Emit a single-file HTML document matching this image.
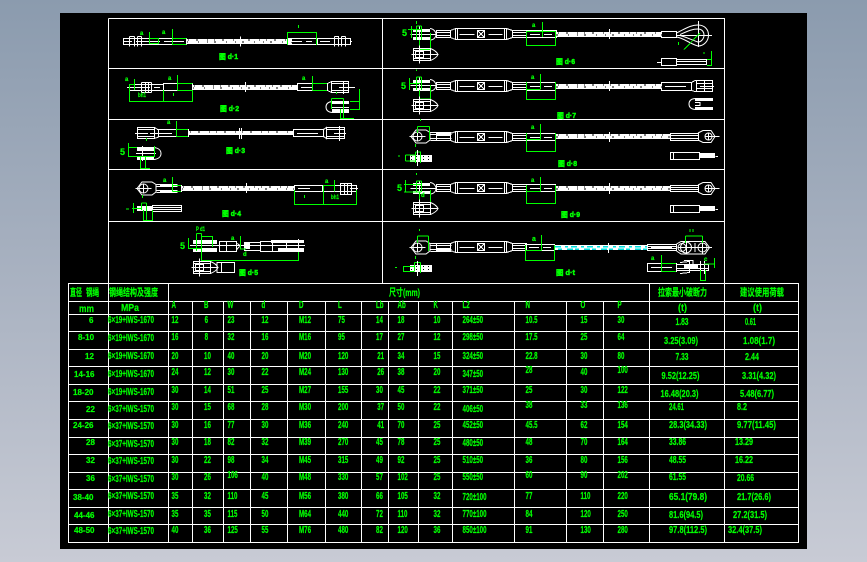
<!DOCTYPE html>
<html><head><meta charset="utf-8">
<style>
html,body{margin:0;padding:0;width:867px;height:562px;overflow:hidden;background:linear-gradient(#8b9bae,#a9b2c1 50%,#c8cbd5)}
svg{position:absolute;left:0;top:0;display:block}
text{font-family:"Liberation Sans","WenQuanYi Zen Hei","Noto Sans CJK SC",sans-serif;fill:#0f0;stroke:#0f0;stroke-width:.2;font-size:10px;font-weight:bold}
.w{fill:none;stroke:#fff;stroke-width:1;shape-rendering:crispEdges}
.wc{fill:none;stroke:#fff;stroke-width:1}
.g{fill:none;stroke:#0f0;stroke-width:1;shape-rendering:crispEdges}
.f{fill:#fff;stroke:none;shape-rendering:crispEdges}
.s{font-size:6px}
.cap{font-size:7px;stroke-width:.5}
</style></head><body>
<svg width="867" height="562" viewBox="0 0 867 562" xmlns="http://www.w3.org/2000/svg">
<defs>
<g id="tb">
<path class="w" d="M0.5 -3.5H14.5V3.5H0.5ZM0.5 -1.5H14.5M0.5 1.5H14.5M14.5 -3.5L19.5 -5.5V5.5L14.5 3.5M19.5 -5.5H70.5V5.5H19.5ZM21.5 -5.5V5.5M68.5 -5.5V5.5M41.5 -3.5H48.5V3.5H41.5ZM41.5 -3.5L48.5 3.5M48.5 -3.5L41.5 3.5M70.5 -5.5L76.5 -3.5V3.5L70.5 5.5M76.5 -3.5H90.5V3.5H76.5ZM76.5 -1.5H90.5M76.5 1.5H90.5"/>
<path class="w" d="M23.5 0.5H38.5M52.5 0.5H66.5"/>
</g>
<g id="fork">
<rect class="f" x="0" y="-5" width="17" height="3"/><rect class="f" x="0" y="3" width="17" height="3"/>
<path class="wc" d="M17 -5.5C21 -5 23 -2 23 0.5C23 3 21 6 17 6"/>
<path class="w" d="M-2.5 0.5H22.5M6.5 -7.5V8.5"/>
</g>
<g id="clev">
<path class="w" d="M0.5 -5.5H17.5V6.5H0.5ZM0.5 -3.5H17.5M0.5 4.5H17.5M-1.5 0.5H25.5M6.5 -8.5V9.5M2.5 -2.5H10.5V3.5H2.5Z"/>
<path class="wc" d="M17.5 -5.5C21 -4 24 -2 25 0.5C24 3 21 5 17.5 6.5"/>
</g>
<g id="eyeL">
<circle class="wc" cx="6.5" cy="0.5" r="4.5"/>
<path class="wc" d="M0 0.5L5 -6H15L19 -3.5V4L15 7H5Z"/>
<path class="w" d="M-1.5 0.5H14.5M6.5 -4.5V5.5"/>
<path class="w" d="M19.5 -3.5H40.5M19.5 -1.5H40.5M19.5 2.5H40.5M19.5 4.5H40.5"/>
</g>
<g id="eyeR">
<circle class="wc" cx="10.5" cy="0.5" r="3.5"/>
<path class="wc" d="M0 -3L5 -5.5H13L17 0.5L13 6.5H5L0 4"/>
<path class="w" d="M7.5 0.5H21.5M10.5 -3.5V4.5"/>
</g>
<g id="pin">
<rect class="f" x="0" y="-3" width="22" height="7"/>
<path d="M1 -1.5H22M1 1.5H22" stroke="#000" stroke-width="1" stroke-dasharray="1 4 1 6" shape-rendering="crispEdges"/>
</g>
<g id="sleeve">
<path class="w" d="M0.5 -3.5H29.5V3.5H0.5ZM29.5 -2.5L45 -2.5"/>
<rect class="f" x="29" y="-2" width="16" height="4"/>
<path class="w" d="M3.5 -3.5V3.5M45.5 0.5H48"/>
</g>
<g id="ropeL">
<rect class="f" x="0" y="-2" width="106" height="5"/>
<path d="M2 -1H106" stroke="#000" stroke-width="1" stroke-dasharray="1 7 2 9 1 6" shape-rendering="crispEdges"/>
<path d="M0 1H106" stroke="#000" stroke-width="1" stroke-dasharray="2 10 1 8 1 6" shape-rendering="crispEdges"/>
</g>
<g id="ropeX">
<rect class="f" x="0" y="-2" width="114" height="5"/>
<path d="M2 -1H114" stroke="#000" stroke-width="1" stroke-dasharray="1 7 2 9 1 6" shape-rendering="crispEdges"/>
<path d="M0 1H114" stroke="#000" stroke-width="1" stroke-dasharray="2 10 1 8 1 6" shape-rendering="crispEdges"/>
</g>
</defs>

<rect x="60" y="13" width="747" height="536" fill="#000"/>

<!-- upper frame -->
<path class="w" d="M108.5 18.5H724.5V283.5M108.5 18.5V283.5M382.5 18.5V283.5M108.5 68.5H724.5M108.5 119.5H724.5M108.5 169.5H724.5M108.5 221.5H724.5"/>

<!-- table grid -->
<path class="w" d="M68.5 283.5H798.5V542.5H68.5ZM68.5 301.5H798.5M68.5 314.5H798.5M68.5 331.5H798.5M68.5 349.5H798.5M68.5 366.5H798.5M68.5 384.5H798.5M68.5 401.5H798.5M68.5 419.5H798.5M68.5 437.5H798.5M68.5 454.5H798.5M68.5 472.5H798.5M68.5 489.5H798.5M68.5 507.5H798.5M68.5 524.5H798.5M108.5 283.5V542.5M168.5 283.5V542.5M649.5 283.5V542.5M724.5 283.5V542.5M192.5 301.5V542.5M223.5 301.5V542.5M250.5 301.5V542.5M287.5 301.5V542.5M325.5 301.5V542.5M361.5 301.5V542.5M388.5 301.5V542.5M418.5 301.5V542.5M452.5 301.5V542.5M514.5 301.5V542.5M566.5 301.5V542.5M603.5 301.5V542.5"/>

<!-- L1 -->
<use href="#ropeL" x="186" y="41"/>
<path class="w" d="M123.5 41.5H132M136 41.5H160M164 41.5H184M123.5 38.5H186.5V44.5H123.5ZM129.5 36.5V46.5M134.5 36.5V46.5M137.5 36.5V46.5M141.5 36.5V46.5M129.5 36.5H134.5M137.5 36.5H141.5M158.5 38.5V44.5M240.5 36.5V46.5M287.5 38.5H350.5V44.5H287.5ZM317.5 38.5V44.5M291 41.5H302M306 41.5H312M320 41.5H330M334.5 36.5V46.5M338.5 36.5V46.5M341.5 36.5V46.5M345.5 36.5V46.5M334.5 36.5H339M341.5 36.5H345.5M350.5 41.5H352"/>
<path class="g" d="M149.5 32V43.5H158.5V38.5H149.5M172.5 29V44.5H186.5M172.5 38.5H186.5M287.5 45V32.5H316.5V45M298.5 25V28"/>
<text class="s" x="140" y="35">a</text><text class="s" x="162" y="34">a</text>
<text class="cap" x="219" y="59" textLength="19" lengthAdjust="spacingAndGlyphs">图 d·1</text>

<!-- L2 -->
<use href="#ropeL" x="192" y="87"/>
<path class="w" d="M127 87.5H150M154 87.5H160M163.5 83.5H192.5V90.5H163.5ZM129.5 84.5H163.5M129.5 90.5H163.5M141.5 82.5V92.5M145.5 82.5V92.5M148.5 82.5V92.5M151.5 82.5V92.5M141.5 82.5H151.5M141.5 92.5H151.5M245.5 82V92M297.5 83.5H327.5V90.5H297.5ZM327.5 83.5L331.5 81.5V92.5L327.5 90.5M331.5 81.5H348.5V92.5H331.5ZM331.5 83.5H348.5M331.5 90.5H348.5M343.5 81V94M339 87.5H355M301 87.5H312"/>
<path class="g" d="M129.5 84V101.5H192.5V90M163.5 90V101.5M129.5 84.5H134.5M134.5 79V90M177.5 75V90.5M177.5 83.5H192.5M177.5 90.5H192.5M312.5 76V90.5M312.5 83.5H327M312.5 90.5H327M173.5 93V96M336.5 92V94"/>
<text class="s" x="125" y="81">a</text><text class="s" x="168" y="80">a</text><text class="s" x="302" y="80">a</text>
<text class="s" x="138" y="97" textLength="8" lengthAdjust="spacingAndGlyphs">bh1</text>
<text class="cap" x="220" y="111" textLength="19" lengthAdjust="spacingAndGlyphs">图 d·2</text>
<rect class="f" x="332" y="101" width="17" height="3"/><rect class="f" x="332" y="109" width="17" height="4"/>
<path class="wc" d="M332 101.5C328 102 326 104 326 107C326 110 328 112 332 112.5"/>
<path class="w" d="M332 107.5H349M343.5 100V114"/>
<path class="g" d="M331.5 98.5H343.5M331.5 98.5V109M343.5 98.5V118M340.5 109V118.5H354M350 101.5H359.5V98M359.5 89V110M350 109.5H359.5"/>

<!-- L3 -->
<rect class="f" x="188" y="131" width="105" height="4"/>
<path d="M190 132H293" stroke="#000" stroke-dasharray="1 7 2 9 1 6" shape-rendering="crispEdges"/>
<path class="w" d="M137.5 127.5H154.5V138.5H137.5ZM137.5 129.5H154.5M137.5 136.5H154.5M154.5 127.5L158.5 130V137L154.5 138.5M158.5 129.5H188.5V136.5H158.5ZM135 133.5H148M150 133.5H172M241.5 128V139M239.5 128V139M293.5 129.5H323.5V136.5H293.5ZM323.5 129.5L326.5 127.5V138.5L323.5 136.5M326.5 127.5H344.5V138.5H326.5ZM326.5 129.5H344.5M326.5 136.5H344.5M339.5 126V141M334 133.5H346M297 133.5H318"/>
<path class="g" d="M176.5 121V136.5M176.5 129.5H188M176.5 136.5H188M146.5 138V141"/>
<text class="s" x="167" y="124">a</text>
<rect class="f" x="137" y="147" width="17" height="4"/><rect class="f" x="137" y="156" width="17" height="4"/>
<path class="wc" d="M154 147.5C158 148 161 150 161 153.5C161 157 158 159 154 159.5"/>
<path class="w" d="M136 153.5H156M142.5 146V161"/>
<path class="g" d="M128.5 143V156.5H154.5V146M128.5 147.5H137M140.5 157V168.5H150M145.5 157V168.5"/>
<text x="120" y="155" style="font-size:9px">5</text>
<text class="cap" x="226" y="153" textLength="19" lengthAdjust="spacingAndGlyphs">图 d·3</text>

<!-- L4 -->
<rect class="f" x="181" y="186" width="113" height="5"/>
<path d="M183 187H294" stroke="#000" stroke-dasharray="1 7 2 9 1 6" shape-rendering="crispEdges"/>
<path d="M181 189H294" stroke="#000" stroke-dasharray="2 10 1 8 1 6" shape-rendering="crispEdges"/>
<use href="#eyeL" x="137" y="188"/>
<path class="w" d="M160 185.5H181.5V191.5H160M246.5 183V193M294.5 185.5H356.5V191.5H294.5ZM322.5 185.5V191.5M298 188.5H310M340.5 183.5H351.5V194.5H340.5ZM344.5 183.5V194.5M347.5 183.5V194.5M358 188.5H350"/>
<path class="g" d="M172.5 177V191.5M172.5 185.5H181M172.5 191.5H181M294.5 190V204.5H356.5V190M323.5 185V204.5M334.5 180V191.5M323.5 185.5H334.5M304.5 195V198M142.5 195V198"/>
<text class="s" x="163" y="182">a</text><text class="s" x="325" y="183">a</text>
<text class="s" x="331" y="199" textLength="8" lengthAdjust="spacingAndGlyphs">bh1</text>
<path class="w" d="M152.5 205.5H181.5V211.5H152.5ZM152.5 207.5H181.5M152.5 209.5H181.5"/>
<rect class="f" x="137" y="206" width="16" height="5"/>
<path class="g" d="M133.5 203V213M132 208.5H141.5M141.5 203H146.5M141.5 203V210M146.5 203V220.5M143.5 210V220.5H152.5V210M126 209H129"/>
<text class="cap" x="222" y="216" textLength="19" lengthAdjust="spacingAndGlyphs">图 d·4</text>

<!-- L5 -->
<rect class="f" x="193" y="240" width="24" height="4"/><rect class="f" x="193" y="248" width="24" height="4"/>
<rect class="f" x="271" y="240" width="33" height="3"/><rect class="f" x="278" y="248" width="26" height="4"/>
<rect class="f" x="244" y="243" width="6" height="6"/>
<path class="w" d="M190 245.5H305M219.5 241.5H236.5V251.5H219.5ZM260.5 241.5H286.5V251.5H260.5ZM236.5 243L240 245.5L236.5 250M244.5 242.5H260.5V250.5H244.5ZM298.5 239V255M226.5 241.5V251.5M272.5 241.5V251.5"/>
<path class="g" d="M196.5 233.5H201.5M196.5 233.5V251M201.5 233.5V260.5H298.5V252M201.5 236.5H212.5V247M188.5 238V248.5H201M240.5 236V249H246"/>
<text x="180" y="249" style="font-size:9px">5</text>
<text class="s" x="196" y="231" textLength="9" lengthAdjust="spacingAndGlyphs">P d1</text>
<text class="s" x="231" y="240">a</text><text class="s" x="243" y="256">d</text>
<use href="#clev" x="193" y="267"/>
<path class="w" d="M217 262.5H234.5V272.5H217ZM221.5 262.5V272.5M234.5 263V272"/>
<text class="cap" x="239" y="275" textLength="19" lengthAdjust="spacingAndGlyphs">图 d·5</text>

<!-- R1 -->
<use href="#fork" x="413" y="34"/><use href="#tb" x="436" y="34"/>
<path class="w" d="M526.5 30.5H556.5V37.5H526.5ZM530 34.5H540M544 34.5H552M661.5 31.5H676.5V37.5H661.5ZM609.5 29V39"/>
<use href="#ropeL" x="556" y="34"/>
<path class="wc" d="M676.5 33C685 29 690 25 698 25C705 25 708.5 30 708.5 35C708.5 41 704 46 698 46C690 44 684 38 676.5 37"/>
<path class="wc" d="M680 34.5C688 31 692 29 698 29C702 29 704 32 704 35C704 39 701 42 698 42C692 40 686 37 680 35.5"/>
<path class="w" d="M698.5 21V47M676 35.5H712"/>
<path class="g" d="M411.5 26V38M408 29.5H421M416.5 26H421.5M416.5 26V40M421.5 26V40M419.5 40V49.5H430.5V33M416.5 21V24M526.5 31.5H555.5M526.5 31.5V45.5H555.5V31.5M542.5 22V37M678.5 42V45M684 49.5L700 33"/>
<text x="402" y="36" style="font-size:9px">5</text><text class="s" x="532" y="27">a</text>
<text class="cap" x="556" y="64" textLength="19" lengthAdjust="spacingAndGlyphs">图 d·6</text>
<use href="#clev" x="413" y="54"/>
<path class="w" d="M657 62.5H661.5M661.5 58.5H676.5V65.5H661.5ZM676.5 59.5H706.5V64.5H676.5ZM676.5 61.5H706.5"/>
<path class="g" d="M711.5 51V65.5H707M707 59.5H712M703 53H705"/>

<!-- R2 -->
<use href="#fork" x="413" y="85"/><use href="#tb" x="436" y="86"/>
<path class="w" d="M526.5 82.5H555.5V90.5H526.5ZM530 86.5H540M544 86.5H552M661.5 82.5H691.5V90.5H661.5ZM665 86.5H686M609.5 81V91M691.5 82.5L695 80.5H712.5V91.5H695L691.5 90.5M696.5 80.5V91.5M704.5 80V92M700 86.5H714M696 83.5H712M696 88.5H712"/>
<use href="#ropeL" x="556" y="86"/>
<path class="g" d="M409.5 78V90M409 83.5H420M416.5 77H421.5M416.5 77V90M421.5 77V90M419.5 90V99H430.5V85M416.5 69.5V71M526.5 82V99.5H555.5V82M540.5 74V89M526.5 89.5H540.5"/>
<text x="401" y="89" style="font-size:9px">5</text><text class="s" x="531" y="79">a</text>
<text class="cap" x="557" y="118" textLength="19" lengthAdjust="spacingAndGlyphs">图 d·7</text>
<use href="#clev" x="413" y="105"/>
<rect class="f" x="695" y="98" width="18" height="3"/><rect class="f" x="695" y="107" width="18" height="3"/>
<path class="wc" d="M695 98.5C690 99 689 102 689 104C689 107 691 109 695 109.5"/>
<path class="w" d="M695 102.5H700V105.5H695"/>

<!-- R3 -->
<use href="#eyeL" x="411" y="136"/><use href="#tb" x="436" y="137"/>
<path class="w" d="M526.5 133.5H555.5V140.5H526.5ZM530 137.5H540M544 137.5H552M670.5 133.5H698.5V140.5H670.5ZM609.5 132V142M670.5 135.5H698.5M670.5 138.5H698.5"/>
<use href="#ropeX" x="556" y="136"/>
<use href="#eyeR" x="698" y="136"/>
<path class="g" d="M417.5 126.5H429.5M417.5 126.5V133M429.5 126.5V140M420.5 119V121M415.5 144V147M526.5 133V151.5H555.5V133M540.5 124V139.5M526.5 139.5H540.5"/>
<text class="s" x="531" y="129">a</text>
<text class="cap" x="558" y="166" textLength="19" lengthAdjust="spacingAndGlyphs">图 d·8</text>
<use href="#pin" x="410" y="158"/><path class="g" d="M405.5 155V161M405.5 155H415M405.5 161H415M415.5 152V163M415.5 152H420.5V163M398 156H400"/>
<path class="w" d="M417.5 150V166"/>
<use href="#sleeve" x="670" y="156"/>

<!-- R4 -->
<use href="#fork" x="413" y="188"/><use href="#tb" x="436" y="188"/>
<path class="w" d="M526.5 184.5H555.5V191.5H526.5ZM530 188.5H540M544 188.5H552M670.5 185.5H698.5V191.5H670.5ZM609.5 183V194M670.5 187.5H698.5M670.5 189.5H698.5"/>
<use href="#ropeX" x="556" y="188"/>
<use href="#eyeR" x="698" y="188"/>
<path class="g" d="M405.5 180V192M404 192H421M404 184.5H421M416.5 181H421.5M416.5 181V192M421.5 181V192M419.5 192V202.5H430.5V190M416.5 173V175M526.5 185V203.5H555.5V185M540.5 177V191.5M526.5 191.5H540.5"/>
<text x="397" y="191" style="font-size:9px">5</text><text class="s" x="531" y="182">a</text><text class="s" x="421" y="197">d</text>
<text class="cap" x="561" y="217" textLength="19" lengthAdjust="spacingAndGlyphs">图 d·9</text>
<use href="#clev" x="413" y="208"/>
<use href="#sleeve" x="670" y="209"/>

<!-- R5 -->
<use href="#eyeL" x="411" y="247"/><use href="#tb" x="436" y="247"/>
<path class="w" d="M525.5 244.5H554.5V250.5H525.5ZM529 247.5H539M543 247.5H551"/>
<rect x="555" y="245" width="93" height="5" fill="#fff" shape-rendering="crispEdges"/>
<path d="M555 246.5H648" stroke="#0dd" stroke-width="1.5" stroke-dasharray="6 4 3 3" shape-rendering="crispEdges"/>
<path d="M558 249H648" stroke="#0dd" stroke-width="1.5" stroke-dasharray="4 5 6 2" shape-rendering="crispEdges"/>
<path class="w" d="M608.5 243V253M647.5 244.5H676.5V250.5H647.5ZM647.5 246.5H676.5M647.5 248.5H676.5M651 247.5H672"/>
<circle class="wc" cx="686" cy="247.5" r="5.5"/><circle class="wc" cx="702.5" cy="247.5" r="4.5"/><circle class="wc" cx="682" cy="247.5" r="4"/>
<path class="wc" d="M676.5 244L681 241.5H695L705 241.5L709.5 247.5L705 254H681L676.5 251"/>
<path class="w" d="M678 247.5H712M686.5 241V254M702.5 241V254M695 243V252"/>
<path class="g" d="M417.5 236H428.5M417.5 236V243M428.5 236V251M419.5 229V231M415.5 256V259M525.5 245V260.5H554.5V245M541.5 235V250.5M525.5 250.5H541.5M685.5 236H702.5M685.5 236V243M702.5 236V243M690 229V232M693 229V232"/>
<text x="532" y="241" style="font-size:7px">a</text>
<text class="cap" x="556" y="275" textLength="19" lengthAdjust="spacingAndGlyphs">图 d·t</text>
<use href="#pin" x="410" y="268"/>
<path class="g" d="M403 266.5H414.5M403 271.5H414.5M403.5 266V272M414.5 262.5H420.5M414.5 262.5V271M420.5 262.5V273M395 267.5H397"/>
<path class="w" d="M417.5 261V276"/>
<path class="w" d="M647.5 263.5H676.5V271.5H647.5ZM651 267.5H672M676.5 264.5H708.5V270.5H676.5ZM676.5 268.5H708.5M680 262.5L689.5 261.5V272.5L680 273.5M684 260.5H693V264M700.5 261V274M704.5 261V274"/>
<rect class="f" x="684" y="265" width="14" height="3"/>
<path class="g" d="M661.5 255V271.5M661.5 263.5H676M661.5 271.5H676M714.5 258V268M704 264H715M700.5 270V280.5H705.5V270"/>
<text class="s" x="651" y="260">a</text><text class="s" x="704" y="261">c</text>

<!-- table header -->
<text x="70" y="296" textLength="12" lengthAdjust="spacingAndGlyphs">直径</text>
<text x="86" y="296" textLength="13" lengthAdjust="spacingAndGlyphs">钢绳</text>
<text x="109" y="296" textLength="49" lengthAdjust="spacingAndGlyphs">钢绳结构及强度</text>
<text x="389" y="296" textLength="31" lengthAdjust="spacingAndGlyphs">尺寸(mm)</text>
<text x="658" y="296" textLength="49" lengthAdjust="spacingAndGlyphs">拉索最小破断力</text>
<text x="740" y="296" textLength="44" lengthAdjust="spacingAndGlyphs">建议使用荷载</text>
<text x="79" y="312" textLength="15" lengthAdjust="spacingAndGlyphs">mm</text>
<text x="121" y="311" textLength="18" lengthAdjust="spacingAndGlyphs">MPa</text>
<text x="678" y="311" textLength="9" lengthAdjust="spacingAndGlyphs">(t)</text>
<text x="753" y="311" textLength="9" lengthAdjust="spacingAndGlyphs">(t)</text>

<g>
<g transform="translate(171.5 0) scale(.62 1)"><text y="308">A</text><text y="323">12</text><text y="340">16</text><text y="359">20</text><text y="375">24</text><text y="393">30</text><text y="410">30</text><text y="428">30</text><text y="445">30</text><text y="463">30</text><text y="480">30</text><text y="499">35</text><text y="517">35</text><text y="533">40</text></g>
<g transform="translate(204 0) scale(.62 1)"><text y="308">B</text><text y="323" dx="1">6</text><text y="340" dx="1">8</text><text y="359">10</text><text y="375">12</text><text y="393">14</text><text y="410">15</text><text y="428">16</text><text y="445">18</text><text y="463">22</text><text y="480">26</text><text y="499">32</text><text y="517">35</text><text y="533">36</text></g>
<g transform="translate(227.5 0) scale(.62 1)"><text y="308">W</text><text y="323">23</text><text y="340">32</text><text y="359">40</text><text y="375">30</text><text y="393">51</text><text y="410">68</text><text y="428">77</text><text y="445">82</text><text y="463">98</text><text y="478">106</text><text y="499">110</text><text y="517">115</text><text y="533">125</text></g>
<g transform="translate(261.5 0) scale(.62 1)"><text y="308">d</text><text y="323">12</text><text y="340">16</text><text y="359">20</text><text y="375">22</text><text y="393">25</text><text y="410">28</text><text y="428">30</text><text y="445">32</text><text y="463">34</text><text y="480">40</text><text y="499">45</text><text y="517">50</text><text y="533">55</text></g>
<g transform="translate(299 0) scale(.62 1)"><text y="308">D</text><text y="323">M12</text><text y="340">M16</text><text y="359">M20</text><text y="375">M24</text><text y="393">M27</text><text y="410">M30</text><text y="428">M36</text><text y="445">M39</text><text y="463">M45</text><text y="480">M48</text><text y="499">M56</text><text y="517">M64</text><text y="533">M76</text></g>
<g transform="translate(338 0) scale(.62 1)"><text y="308">L</text><text y="323">75</text><text y="340">95</text><text y="359">120</text><text y="375">130</text><text y="393">155</text><text y="410">200</text><text y="428">240</text><text y="445">270</text><text y="463">315</text><text y="480">330</text><text y="499">380</text><text y="517">440</text><text y="533">480</text></g>
<g transform="translate(376 0) scale(.62 1)"><text y="308">Lb</text><text y="323">14</text><text y="340">17</text><text y="359" dx="2">21</text><text y="375" dx="2">26</text><text y="393">30</text><text y="410" dx="2">37</text><text y="428" dx="2">41</text><text y="445">45</text><text y="463">49</text><text y="480">57</text><text y="499">66</text><text y="517">72</text><text y="533">82</text></g>
<g transform="translate(397.5 0) scale(.62 1)"><text y="308">Ab</text><text y="323">18</text><text y="340">27</text><text y="359">34</text><text y="375">38</text><text y="393">45</text><text y="410">50</text><text y="428">70</text><text y="445">78</text><text y="463">92</text><text y="480">102</text><text y="499">105</text><text y="517">110</text><text y="533">120</text></g>
<g transform="translate(433.5 0) scale(.62 1)"><text y="308">K</text><text y="323">10</text><text y="340">12</text><text y="359">15</text><text y="375">20</text><text y="393">22</text><text y="410">22</text><text y="428">25</text><text y="445">25</text><text y="463">25</text><text y="480">25</text><text y="499">32</text><text y="517">32</text><text y="533">36</text></g>
<g transform="translate(462.5 0) scale(.62 1)"><text y="308">L2</text><text y="323">264±50</text><text y="340">298±50</text><text y="359">324±50</text><text y="377">347±50</text><text y="393">371±50</text><text y="412">406±50</text><text y="428">452±50</text><text y="446">480±50</text><text y="463">510±50</text><text y="480">550±50</text><text y="500">720±100</text><text y="517">770±100</text><text y="533">850±100</text></g>
<g transform="translate(525.5 0) scale(.62 1)"><text y="308">N</text><text y="323">10.5</text><text y="340">17.5</text><text y="359">22.8</text><text y="373">28</text><text y="393">25</text><text y="408">38</text><text y="428">45.5</text><text y="445">48</text><text y="463">36</text><text y="478">60</text><text y="499">77</text><text y="517">84</text><text y="533">91</text></g>
<g transform="translate(580.5 0) scale(.62 1)"><text y="308">O</text><text y="323">15</text><text y="340">25</text><text y="359">30</text><text y="375">40</text><text y="393">30</text><text y="408">33</text><text y="428">62</text><text y="445">70</text><text y="463">80</text><text y="478">90</text><text y="499">110</text><text y="517">120</text><text y="533">130</text></g>
<g transform="translate(617.5 0) scale(.62 1)"><text y="308">P</text><text y="323">30</text><text y="340">64</text><text y="359">80</text><text y="373">100</text><text y="393">122</text><text y="408">136</text><text y="428">154</text><text y="445">164</text><text y="463">156</text><text y="478">202</text><text y="499">220</text><text y="517">250</text><text y="533">280</text></g>
</g>

<g>
<text x="89" y="323" style="font-size:8px">6</text><text x="78" y="340" style="font-size:8px">8-10</text><text x="85" y="359" style="font-size:8px">12</text><text x="74" y="377" style="font-size:8px">14-16</text><text x="73" y="395" style="font-size:8px">18-20</text><text x="86" y="412" style="font-size:8px">22</text><text x="73" y="428" style="font-size:8px">24-26</text><text x="86" y="445" style="font-size:8px">28</text><text x="86" y="463" style="font-size:8px">32</text><text x="86" y="481" style="font-size:8px">36</text><text x="73" y="500" style="font-size:8px">38-40</text><text x="74" y="518" style="font-size:8px">44-46</text><text x="74" y="533" style="font-size:8px">48-50</text>
</g>

<g>
<text x="108" y="323" textLength="46" lengthAdjust="spacingAndGlyphs">6×19+IWS-1670</text>
<text x="108" y="341" textLength="46" lengthAdjust="spacingAndGlyphs">6×19+IWS-1670</text>
<text x="108" y="359" textLength="46" lengthAdjust="spacingAndGlyphs">6×19+IWS-1670</text>
<text x="108" y="377" textLength="46" lengthAdjust="spacingAndGlyphs">6×19+IWS-1670</text>
<text x="108" y="395" textLength="46" lengthAdjust="spacingAndGlyphs">6×19+IWS-1670</text>
<text x="108" y="412" textLength="46" lengthAdjust="spacingAndGlyphs">6×37+IWS-1570</text>
<text x="108" y="429" textLength="46" lengthAdjust="spacingAndGlyphs">6×37+IWS-1570</text>
<text x="108" y="447" textLength="46" lengthAdjust="spacingAndGlyphs">6×37+IWS-1570</text>
<text x="108" y="464" textLength="46" lengthAdjust="spacingAndGlyphs">6×37+IWS-1570</text>
<text x="108" y="482" textLength="46" lengthAdjust="spacingAndGlyphs">6×37+IWS-1570</text>
<text x="108" y="499" textLength="46" lengthAdjust="spacingAndGlyphs">6×37+IWS-1570</text>
<text x="108" y="517" textLength="46" lengthAdjust="spacingAndGlyphs">6×37+IWS-1570</text>
<text x="108" y="534" textLength="46" lengthAdjust="spacingAndGlyphs">6×37+IWS-1570</text>
</g>

<g>
<text x="675.5" y="325" textLength="13" lengthAdjust="spacingAndGlyphs">1.83</text>
<text x="664" y="344" textLength="34" lengthAdjust="spacingAndGlyphs">3.25(3.09)</text>
<text x="675.5" y="360" textLength="13" lengthAdjust="spacingAndGlyphs">7.33</text>
<text x="661.5" y="379" textLength="38" lengthAdjust="spacingAndGlyphs">9.52(12.25)</text>
<text x="660.5" y="397" textLength="38" lengthAdjust="spacingAndGlyphs">16.48(20.3)</text>
<text x="669" y="410" textLength="15" lengthAdjust="spacingAndGlyphs">24.61</text>
<text x="669" y="428" textLength="38" lengthAdjust="spacingAndGlyphs">28.3(34.33)</text>
<text x="669" y="445" textLength="17" lengthAdjust="spacingAndGlyphs">33.86</text>
<text x="669" y="463" textLength="17" lengthAdjust="spacingAndGlyphs">48.55</text>
<text x="669" y="480" textLength="17" lengthAdjust="spacingAndGlyphs">61.55</text>
<text x="669" y="500" textLength="38" lengthAdjust="spacingAndGlyphs">65.1(79.8)</text>
<text x="669" y="518" textLength="34" lengthAdjust="spacingAndGlyphs">81.6(94.5)</text>
<text x="669" y="533" textLength="38" lengthAdjust="spacingAndGlyphs">97.8(112.5)</text>
<text x="745" y="325" textLength="11" lengthAdjust="spacingAndGlyphs">0.61</text>
<text x="743" y="344" textLength="32" lengthAdjust="spacingAndGlyphs">1.08(1.7)</text>
<text x="745" y="360" textLength="14" lengthAdjust="spacingAndGlyphs">2.44</text>
<text x="742" y="379" textLength="34" lengthAdjust="spacingAndGlyphs">3.31(4.32)</text>
<text x="740" y="397" textLength="34" lengthAdjust="spacingAndGlyphs">5.48(6.77)</text>
<text x="737" y="410" textLength="10" lengthAdjust="spacingAndGlyphs">8.2</text>
<text x="737" y="428" textLength="39" lengthAdjust="spacingAndGlyphs">9.77(11.45)</text>
<text x="735" y="445" textLength="18" lengthAdjust="spacingAndGlyphs">13.29</text>
<text x="735" y="463" textLength="18" lengthAdjust="spacingAndGlyphs">16.22</text>
<text x="737" y="481" textLength="17" lengthAdjust="spacingAndGlyphs">20.66</text>
<text x="737" y="500" textLength="34" lengthAdjust="spacingAndGlyphs">21.7(26.6)</text>
<text x="733" y="518" textLength="34" lengthAdjust="spacingAndGlyphs">27.2(31.5)</text>
<text x="728" y="533" textLength="34" lengthAdjust="spacingAndGlyphs">32.4(37.5)</text>
</g>
</svg>
</body></html>
